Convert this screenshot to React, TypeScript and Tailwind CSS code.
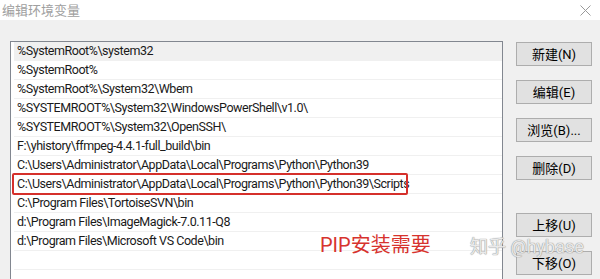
import React from 'react';

const paths = [
  '%SystemRoot%\\system32',
  '%SystemRoot%',
  '%SystemRoot%\\System32\\Wbem',
  '%SYSTEMROOT%\\System32\\WindowsPowerShell\\v1.0\\',
  '%SYSTEMROOT%\\System32\\OpenSSH\\',
  'F:\\yhistory\\ffmpeg-4.4.1-full_build\\bin',
  'C:\\Users\\Administrator\\AppData\\Local\\Programs\\Python\\Python39',
  'C:\\Users\\Administrator\\AppData\\Local\\Programs\\Python\\Python39\\Scripts',
  'C:\\Program Files\\TortoiseSVN\\bin',
  'd:\\Program Files\\ImageMagick-7.0.11-Q8',
  'd:\\Program Files\\Microsoft VS Code\\bin',
  '',
  '',
];

const font = { fontFamily: 'Roboto, "Noto Sans CJK SC", sans-serif' };

function DialogButton({ label, className = '' }: { label: string; className?: string }) {
  return (
    <button
      type="button"
      className={`h-[24px] w-[76px] bg-[#e1e1e1] border border-[#adadad] text-[13px] text-black leading-none ${className}`}
    >
      {label}
    </button>
  );
}

export default function App() {
  return (
    <div
      className="relative w-[600px] h-[279px] overflow-hidden bg-[#f0f0f0] flex flex-col"
      style={font}
    >
      {/* title bar */}
      <div className="h-[20px] shrink-0 bg-white flex items-center justify-between pl-[2px] pr-[9px]">
        <span className="text-[13px] text-[#a0a0a0] leading-none">编辑环境变量</span>
        <svg width="11" height="11" viewBox="0 0 11 11" className="text-[#9a9a9a]">
          <path d="M0.5 0.5 L10.5 10.5 M10.5 0.5 L0.5 10.5" stroke="currentColor" strokeWidth="1" fill="none" />
        </svg>
      </div>

      <div className="flex flex-1 min-h-0 overflow-hidden pl-[10px] pt-[21px]">
        {/* list */}
        <div className="relative shrink-0 w-[493px] bg-white border-l border-t border-r border-[#828790] pl-[3px]">
          {paths.map((p, i) => (
            <div
              key={i}
              className={`h-[19px] flex items-center pl-[3px] border-b border-[#f0f0f0] text-[12.5px] tracking-[-0.45px] text-[#1a1a1a] whitespace-nowrap ${
                i === 0 ? 'bg-[#f0f0f0]' : ''
              }`}
            >
              {p}
            </div>
          ))}

          {/* highlight box */}
          <div className="absolute left-[1px] top-[131px] w-[396px] h-[22px] border-2 border-[#d5302b] rounded-[2px]" />

          {/* annotation */}
          <div className="absolute left-[309px] top-[193px] text-[20px] leading-none text-[#d7332e]">
            PIP安装需要
          </div>
        </div>

        {/* buttons */}
        <div className="ml-[13px] pt-[1px] flex flex-col">
          <DialogButton label="新建(N)" />
          <DialogButton label="编辑(E)" className="mt-[14px]" />
          <DialogButton label="浏览(B)..." className="mt-[14px]" />
          <DialogButton label="删除(D)" className="mt-[14px]" />
          <DialogButton label="上移(U)" className="mt-[33px]" />
          <DialogButton label="下移(O)" className="mt-[14px]" />
        </div>
      </div>

      {/* watermark */}
      <div className="absolute left-[470px] top-[238px] text-[18px] leading-none text-[#e8e8e8] opacity-90 [text-shadow:0_0_1px_#8a8a8a,0_0_1px_#8a8a8a] whitespace-nowrap">
        知乎 @hybase
      </div>
    </div>
  );
}
